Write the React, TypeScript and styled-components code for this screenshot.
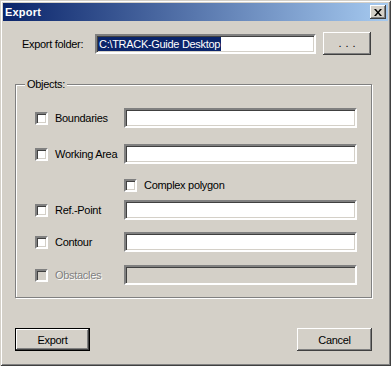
import React from 'react'
import styled, { createGlobalStyle, css } from 'styled-components'

const GlobalStyle = createGlobalStyle`
    body {
        margin: 0;
        background: #d4d0c8;
        font-family: "Liberation Sans", Arial, sans-serif;
        font-size: 11px;
        letter-spacing: -0.3px;
    }
`

const face = '#d4d0c8'

const sunken = css`
    box-sizing: border-box;
    border-style: solid;
    border-width: 2px;
    border-color: #808080 #ffffff #ffffff #808080;
    box-shadow: inset 1px 1px 0 #404040, inset -1px -1px 0 ${face};
`

const raised = css`
    box-sizing: border-box;
    border: none;
    background: ${face};
    box-shadow: inset -1px -1px 0 #404040, inset 1px 1px 0 #ffffff, inset -2px -2px 0 #808080;
`

const Window = styled.div`
    box-sizing: border-box;
    width: 391px;
    height: 366px;
    padding: 3px;
    background: ${face};
    box-shadow: inset 1px 1px 0 ${face}, inset -1px -1px 0 #404040,
        inset 2px 2px 0 #ffffff, inset -2px -2px 0 #808080;
    display: flex;
    flex-direction: column;
    color: #000;
`

const TitleBar = styled.div`
    height: 18px;
    display: flex;
    align-items: center;
    justify-content: space-between;
    padding: 0 2px 0 2px;
    background: linear-gradient(to right, #0a246a, #a6caf0);
`

const Title = styled.span`
    color: #fff;
    font-weight: bold;
    font-size: 11px;
    letter-spacing: 0.2px;
`

const CloseButton = styled.button`
    ${raised};
    width: 16px;
    height: 14px;
    padding: 0;
    display: flex;
    align-items: center;
    justify-content: center;
`

const FolderRow = styled.div`
    display: flex;
    align-items: center;
    margin: 11px 0 0 19px;
`

const FolderLabel = styled.span`
    width: 73px;
`

const Field = styled.div<{ $width: number; $disabled?: boolean }>`
    ${sunken};
    width: ${p => p.$width}px;
    height: 20px;
    background: ${p => (p.$disabled ? face : '#fff')};
    display: flex;
    align-items: center;
    padding-left: 1px;
`

const Selected = styled.span`
    background: #0a246a;
    color: #fff;
    line-height: 14px;
    padding: 0 1px;
`

const Button = styled.button<{ $width: number; $default?: boolean }>`
    ${raised};
    width: ${p => p.$width}px;
    height: 23px;
    font-family: inherit;
    font-size: 11px;
    letter-spacing: -0.3px;
    color: #000;
    padding: 0;
    ${p =>
        p.$default &&
        css`
            border: 1px solid #000;
        `}
`

const BrowseButton = styled(Button)`
    margin-left: 7px;
    letter-spacing: 4px;
    padding-left: 4px;
    padding-bottom: 2px;
    -webkit-font-smoothing: antialiased;
`

const Group = styled.div`
    position: relative;
    box-sizing: border-box;
    width: 357px;
    height: 214px;
    margin: 29px 0 0 12px;
    border: 1px solid #808080;
    box-shadow: inset 1px 1px 0 #fff, 1px 1px 0 #fff;
    padding: 23px 13px 0 19px;
    display: flex;
    flex-direction: column;
`

const Legend = styled.span`
    position: absolute;
    top: -7px;
    left: 9px;
    padding: 0 2px;
    background: ${face};
    line-height: 13px;
`

const Row = styled.div<{ $top: number; $indent?: number }>`
    display: flex;
    align-items: center;
    height: 20px;
    margin-top: ${p => p.$top}px;
    padding-left: ${p => p.$indent ?? 0}px;
`

const CheckLabel = styled.label<{ $disabled?: boolean; $auto?: boolean }>`
    display: flex;
    align-items: center;
    width: ${p => (p.$auto ? 'auto' : '89px')};
    color: ${p => (p.$disabled ? '#808080' : '#000')};
    text-shadow: ${p => (p.$disabled ? '1px 1px 0 #fff' : 'none')};
`

const Box = styled.span<{ $disabled?: boolean }>`
    ${sunken};
    width: 13px;
    height: 13px;
    margin-right: 7px;
    background: ${p => (p.$disabled ? face : '#fff')};
    flex-shrink: 0;
`

const ButtonRow = styled.div`
    display: flex;
    justify-content: space-between;
    margin-top: 30px;
    padding: 0 16px 0 12px;
`

const rows = [
    { label: 'Boundaries', top: 0 },
    { label: 'Working Area', top: 16 },
]

const rows2 = [
    { label: 'Ref.-Point', top: 5 },
    { label: 'Contour', top: 12 },
]

const App: React.FC = () => {
    return (
        <>
            <GlobalStyle />
            <Window>
                <TitleBar>
                    <Title>Export</Title>
                    <CloseButton>
                        <svg width="8" height="7" viewBox="0 0 8 7">
                            <path d="M0 0 L2 0 L4 2.5 L6 0 L8 0 L5 3.5 L8 7 L6 7 L4 4.5 L2 7 L0 7 L3 3.5 Z" fill="#000" />
                        </svg>
                    </CloseButton>
                </TitleBar>

                <FolderRow>
                    <FolderLabel>Export folder:</FolderLabel>
                    <Field $width={221}>
                        <Selected>C:\TRACK-Guide Desktop</Selected>
                    </Field>
                    <BrowseButton $width={48}>...</BrowseButton>
                </FolderRow>

                <Group>
                    <Legend>Objects:</Legend>
                    {rows.map(r => (
                        <Row key={r.label} $top={r.top}>
                            <CheckLabel>
                                <Box />
                                {r.label}
                            </CheckLabel>
                            <Field $width={233} />
                        </Row>
                    ))}
                    <Row $top={11} $indent={89}>
                        <CheckLabel $auto>
                            <Box />
                            Complex polygon
                        </CheckLabel>
                    </Row>
                    {rows2.map(r => (
                        <Row key={r.label} $top={r.top}>
                            <CheckLabel>
                                <Box />
                                {r.label}
                            </CheckLabel>
                            <Field $width={233} />
                        </Row>
                    ))}
                    <Row $top={13}>
                        <CheckLabel $disabled>
                            <Box $disabled />
                            Obstacles
                        </CheckLabel>
                        <Field $width={233} $disabled />
                    </Row>
                </Group>

                <ButtonRow>
                    <Button $width={75} $default>Export</Button>
                    <Button $width={75}>Cancel</Button>
                </ButtonRow>
            </Window>
        </>
    )
}

export default App
